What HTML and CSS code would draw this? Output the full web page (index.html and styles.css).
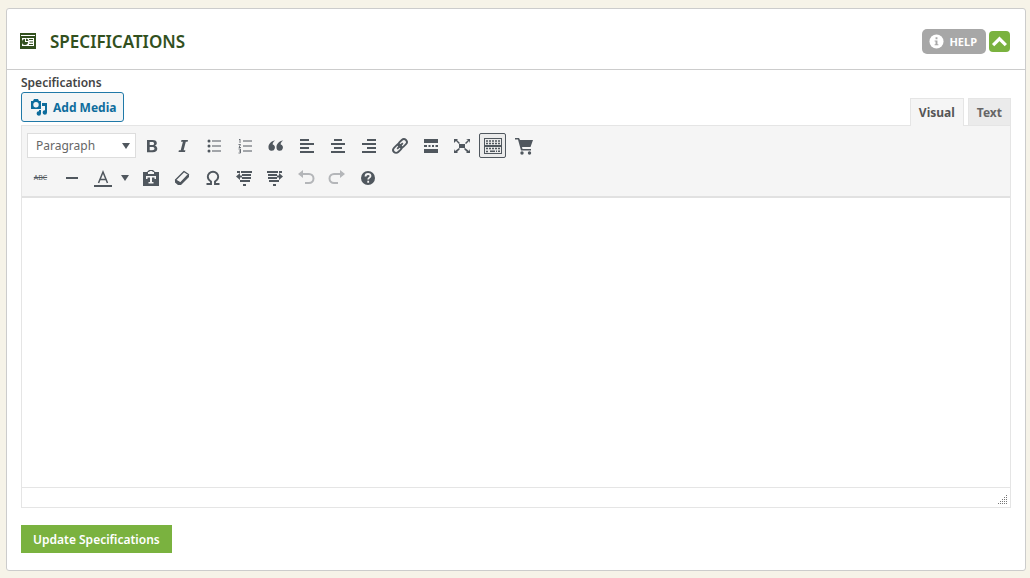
FILE: index.html
```html
<!DOCTYPE html>
<html lang="en">
<head>
  <meta charset="UTF-8" />
  <meta name="viewport" content="width=device-width, initial-scale=1.0" />
  <title>Specifications</title>
  <link rel="stylesheet" href="styles.css">
</head>
<body>
  <section class="panel">
    <header class="panel-header">
      <svg class="panel-icon" viewBox="0 0 16 16" aria-hidden="true">
        <path fill="currentColor" fill-rule="evenodd" d="M0 0h16v16H0zM1 2v1h14V2zM2 5v8h12V5z"/>
        <path fill="currentColor" d="M5 6a3 3 0 1 0 3 3H5zM6 5.500a3 3 0 0 1 2.500 2.500H6zM9 6h4v1H9zM9.500 8.500H13v1H9.500zM9 11h4v1H9z"/>
      </svg>
      <h2>SPECIFICATIONS</h2>
      <div class="panel-actions">
        <button type="button" class="help-button">
          <svg viewBox="0 0 16 16" aria-hidden="true"><circle cx="8" cy="8" r="7.500" fill="#fff"/><path fill="#a7a7a7" d="M7 3.500h2v2H7zM6 7h3v4h1v1H6v-1h1V8H6z"/></svg>
          HELP
        </button>
        <button type="button" class="collapse-button" aria-label="Collapse">
          <svg viewBox="0 0 16 16" aria-hidden="true"><path d="M2 11.500l6-6 6 6" fill="none" stroke="#fff" stroke-width="3"/></svg>
        </button>
      </div>
    </header>

    <form class="panel-body">
      <label class="field-label" for="specifications">Specifications</label>
      <div class="editor-tools">
        <button type="button" class="media-button">
          <svg viewBox="0 0 18 18" aria-hidden="true">
            <path fill="currentColor" fill-rule="evenodd" d="M1 3h2l1-2h4l1 2h2v8H1zM6 4a2.700 2.700 0 1 0 0 5.400A2.700 2.700 0 0 0 6 4z"/>
            <path fill="currentColor" d="M12 5h5v9.500a2.200 2.200 0 1 1-2-2.200V8h-3zM9 12h2v3.500a2.200 2.200 0 1 1-2-2.200z"/>
          </svg>
          Add Media
        </button>
        <div class="editor-tabs">
          <button type="button" class="tab active">Visual</button>
          <button type="button" class="tab">Text</button>
        </div>
      </div>

      <div class="editor">
        <div class="toolbar">
          <!-- First row -->
          <div class="toolbar-row">
            <div class="format">
              <select aria-label="Format">
                <option>Paragraph</option>
              </select>
              <svg viewBox="0 0 8 6" aria-hidden="true"><path fill="currentColor" d="M0 0h8L4 6z"/></svg>
            </div>
            <div class="tool-group">
              <button type="button" class="tool" aria-label="Bold">
                <svg viewBox="0 0 20 20"><path fill="currentColor" fill-rule="evenodd" d="M5 4h5.500c3 0 4.300 1.200 4.300 3 0 1.400-.8 2.300-2 2.700 1.500.3 2.500 1.400 2.500 3 0 2.200-1.600 3.500-4.500 3.500H5zM7.700 6v3h2.200c1.500 0 2.200-.5 2.200-1.500S11.400 6 10 6zM7.700 11v3.200h2.500c1.500 0 2.300-.5 2.300-1.600S11.700 11 10.200 11z"/></svg>
              </button>
              <button type="button" class="tool" aria-label="Italic">
                <svg viewBox="0 0 20 20"><path fill="currentColor" d="M8.500 4H15l-.4 1.800h-1.800L10.600 14.200h1.800l-.4 1.800H5.500l.4-1.800h1.800l2.200-8.400H8z"/></svg>
              </button>
              <button type="button" class="tool" aria-label="Bulleted list">
                <svg viewBox="0 0 20 20"><g fill="currentColor"><circle cx="5" cy="5" r="1.500"/><circle cx="5" cy="10" r="1.500"/><circle cx="5" cy="15" r="1.500"/><path d="M8 4.500h9v1H8zM8 9.500h9v1H8zM8 14.500h9v1H8z"/></g></svg>
              </button>
              <button type="button" class="tool" aria-label="Numbered list">
                <svg viewBox="0 0 20 20"><g fill="none" stroke="currentColor"><path d="M8 5h9M8 10h9M8 15h9"/><path stroke-width=".8" d="M4 4l1-1v4M3.500 8.500h2L4 11.500h2M3.500 13h2v4h-2M4 15h1.500"/></g></svg>
              </button>
              <button type="button" class="tool" aria-label="Blockquote">
                <svg viewBox="0 0 20 20"><path fill="currentColor" d="M9.200 4.500C7 6 6.500 7.500 6.700 8.600a3.200 3.200 0 1 1-4.200 3C2.300 8 5 5 9.200 4.500zM17.200 4.500c-2.200 1.500-2.700 3-2.500 4.100a3.200 3.200 0 1 1-4.200 3C10.300 8 13 5 17.200 4.500z"/></svg>
              </button>
              <button type="button" class="tool" aria-label="Align left">
                <svg viewBox="0 0 20 20"><path fill="currentColor" d="M3 3h9v2H3zM3 7h14v2H3zM3 11h9v2H3zM3 15h14v2H3z"/></svg>
              </button>
              <button type="button" class="tool" aria-label="Align center">
                <svg viewBox="0 0 20 20"><path fill="currentColor" d="M6 3h8v2H6zM3 7h14v2H3zM6 11h8v2H6zM3 15h14v2H3z"/></svg>
              </button>
              <button type="button" class="tool" aria-label="Align right">
                <svg viewBox="0 0 20 20"><path fill="currentColor" d="M8 3h9v2H8zM3 7h14v2H3zM8 11h9v2H8zM3 15h14v2H3z"/></svg>
              </button>
              <button type="button" class="tool" aria-label="Insert link">
                <svg viewBox="0 0 20 20"><g transform="rotate(-45 10 10)" fill="none" stroke="currentColor" stroke-width="1.800"><rect x="1.500" y="7" width="9.500" height="6" rx="3"/><rect x="9" y="7" width="9.500" height="6" rx="3"/><path d="M6 10h8"/></g></svg>
              </button>
              <button type="button" class="tool" aria-label="Read more">
                <svg viewBox="0 0 20 20"><path fill="currentColor" d="M3 3h14v4H3zM3 9h3v2H3zM7.500 9h2v2h-2zM11 9h2v2h-2zM14.500 9H17v2h-2.500zM3 13h14v4H3z"/></svg>
              </button>
              <button type="button" class="tool" aria-label="Fullscreen">
                <svg viewBox="0 0 20 20"><path fill="currentColor" d="M7 8h6v4H7zM2 3h4L5 4l3 3-1 1-3-3-2 2zM18 3v4l-1-2-3 3-1-1 3-3-2-1zM2 17v-4l1 2 4-3 1 1-3 3 1 1zM18 17h-4l1-1-3-3 1-1 4 3 1-2z"/></svg>
              </button>
              <button type="button" class="tool pressed" aria-label="Toolbar toggle" aria-pressed="true">
                <svg viewBox="0 0 20 20"><path fill="currentColor" fill-rule="evenodd" d="M1 2h18v16H1zM2 3v6h16V3zM2 11v6h16v-6z"/><path fill="none" stroke="currentColor" stroke-width="1.500" stroke-dasharray="2 1" d="M3 5h14M3 7.500h14M3 12.500h14M3 15.500h3"/><path fill="currentColor" d="M7 14.500h5v1.500H7zM13 14.500h1v1.500h-1zM15 14.500h2v1.500h-2z"/></svg>
              </button>
              <button type="button" class="tool" aria-label="Products">
                <svg viewBox="0 0 20 20"><path fill="currentColor" d="M1 2h4l1 2h13l-2.500 7H8l.5 2H17v1.500H7L4 3.500H1z"/><circle cx="8" cy="17" r="1.700" fill="currentColor"/><circle cx="15.500" cy="17" r="1.700" fill="currentColor"/></svg>
              </button>
            </div>
          </div>
          <!-- Second row -->
          <div class="toolbar-row">
            <button type="button" class="tool strike" aria-label="Strikethrough"><s>ABC</s></button>
            <button type="button" class="tool" aria-label="Horizontal line">
              <svg viewBox="0 0 20 20"><path fill="currentColor" d="M4 9h12v2H4z"/></svg>
            </button>
            <div class="color-group">
              <button type="button" class="tool" aria-label="Text color">
                <svg viewBox="0 0 20 20"><path fill="none" stroke="currentColor" stroke-width="1.500" d="M5.500 15L10 4l4.500 11M7 11.500h6"/><path fill="currentColor" d="M1 17h18v2H1z"/></svg>
              </button>
              <button type="button" class="tool tool-caret" aria-label="Choose color">
                <svg viewBox="0 0 8 6"><path fill="currentColor" d="M0 0h8L4 6z"/></svg>
              </button>
            </div>
            <button type="button" class="tool" aria-label="Paste as text">
              <svg viewBox="0 0 20 20"><path fill="currentColor" fill-rule="evenodd" d="M2 4h4l2-2h4l2 2h4v14H2zM7 4v2h6V4h-1l-1-1H9L8 4zM5 8v3h1.500V9.500H9V14H7.500v1.500h5V14H11V9.500h2.500V11H15V8z"/></svg>
            </button>
            <button type="button" class="tool" aria-label="Clear formatting">
              <svg viewBox="0 0 20 20"><path fill="none" stroke="currentColor" stroke-width="1.400" stroke-linejoin="round" d="M3.500 12L12 3.500l4.500 3L8.500 15z"/><path fill="currentColor" d="M3 11.500l5.500 3L17 6v3l-8 8H6l-3-2.500z"/></svg>
            </button>
            <button type="button" class="tool" aria-label="Special character">
              <svg viewBox="0 0 20 20"><path fill="none" stroke="currentColor" stroke-width="1.900" d="M3.500 16H8v-2.500C5.500 12 4.800 10.500 4.800 8.800a5.200 5 0 0 1 10.400 0c0 1.700-.7 3.200-3.200 4.700V16h4.500"/></svg>
            </button>
            <button type="button" class="tool" aria-label="Decrease indent">
              <svg viewBox="0 0 20 20"><path fill="currentColor" d="M3 3h3v2H3zM7 3h11v2H7zM8 6h9v2H8zM8 9h9v2H8zM6 12h10v2H6zM9 16h3v2H9zM2 8.500L6 5v2.500h2v2H6V12z"/></svg>
            </button>
            <button type="button" class="tool" aria-label="Increase indent">
              <svg viewBox="0 0 20 20"><path fill="currentColor" d="M2 3h11v2H2zM14 3h3v2h-3zM3 6h9v2H3zM3 9h9v2H3zM4 12h10v2H4zM8 16h3v2H8zM18 8.500L14 5v2.500h-2v2h2V12z"/></svg>
            </button>
            <button type="button" class="tool" aria-label="Undo" disabled>
              <svg viewBox="0 0 20 20"><path fill="none" stroke="currentColor" stroke-width="2" d="M6 6h7a4.500 4.500 0 0 1 0 9H9"/><path fill="currentColor" d="M2 6l5-4v8z"/></svg>
            </button>
            <button type="button" class="tool" aria-label="Redo" disabled>
              <svg viewBox="0 0 20 20"><path fill="none" stroke="currentColor" stroke-width="2" d="M14 6H7a4.500 4.500 0 0 0 0 9h4"/><path fill="currentColor" d="M18 6l-5-4v8z"/></svg>
            </button>
            <button type="button" class="tool" aria-label="Keyboard shortcuts">
              <svg viewBox="0 0 20 20"><circle cx="10" cy="10" r="7" fill="currentColor"/><path fill="none" stroke="#f5f5f5" stroke-width="1.800" d="M7.500 8.500c0-3.500 5-3 5-.5 0 1.700-2.300 1.600-2.300 3.500M10.200 12.700v2"/></svg>
            </button>
          </div>
        </div>
        <textarea id="specifications"></textarea>
        <div class="statusbar">
          <svg viewBox="0 0 10 10" aria-hidden="true"><path fill="#777" d="M8 0h1v1H8zM6 2h1v1H6zM8 2h1v1H8zM4 4h1v1H4zM6 4h1v1H6zM8 4h1v1H8zM2 6h1v1H2zM4 6h1v1H4zM6 6h1v1H6zM8 6h1v1H8zM0 8h1v1H0zM2 8h1v1H2zM4 8h1v1H4zM6 8h1v1H6zM8 8h1v1H8z"/></svg>
        </div>
      </div>

      <button type="button" class="update-button">Update Specifications</button>
    </form>
  </section>
</body>
</html>
```
FILE: styles.css
```css
* {
  box-sizing: border-box;
}

body {
  margin: 0;
  padding: 8px 4px 6px 6px;
  background-color: #f6f3e8;
  color: #444;
  font-family: "Noto Sans", "Open Sans", sans-serif;
  font-size: 12px;
}

button,
select,
textarea {
  font-family: inherit;
  margin: 0;
}

button {
  cursor: pointer;
}

svg {
  display: block;
  flex-shrink: 0;
}

.panel {
  background: #fff;
  border: 1px solid #ccc;
  border-radius: 3px;
}

/* Panel header */
.panel-header {
  display: flex;
  align-items: center;
  height: 61px;
  padding: 4px 15px 0 13px;
  border-bottom: 1px solid #ccc;
}

.panel-header h2 {
  margin: 0 0 0 14px;
  padding-top: 2px;
  color: #32501e;
  font-size: 17px;
  font-weight: 600;
  line-height: 24px;
}

.panel-icon {
  width: 16px;
  height: 16px;
  color: #32501e;
}

.panel-actions {
  display: flex;
  align-items: center;
  gap: 3px;
  margin-left: auto;
}

.help-button {
  display: flex;
  align-items: center;
  gap: 5px;
  height: 25px;
  padding: 0 9px 0 7px;
  background: #a7a7a7;
  border: none;
  border-radius: 5px;
  color: #fff;
  font-size: 11px;
  font-weight: 700;
}

.help-button svg {
  width: 15px;
  height: 15px;
}

.collapse-button {
  display: grid;
  place-items: center;
  width: 21px;
  height: 21px;
  padding: 0;
  background: #7ab23f;
  border: none;
  border-radius: 4px;
}

.collapse-button svg {
  width: 17px;
  height: 17px;
}

/* Panel body */
.panel-body {
  padding: 4px 14px 17px;
}

.field-label {
  display: block;
  font-weight: 600;
  line-height: 18px;
}

.editor-tools {
  display: flex;
  justify-content: space-between;
  align-items: flex-start;
  height: 33px;
}

.media-button {
  display: flex;
  align-items: center;
  gap: 5px;
  height: 30px;
  padding: 0 7px 0 8px;
  background: #f3f5f6;
  border: 1px solid #2079a8;
  border-radius: 3px;
  color: #0e6d9d;
  font-size: 12px;
  font-weight: 700;
}

.media-button svg {
  width: 18px;
  height: 18px;
}

.editor-tabs {
  display: flex;
  align-self: flex-end;
  gap: 4px;
}

.tab {
  height: 27px;
  padding: 0 8px;
  background: #ebebeb;
  border: 1px solid #e5e5e5;
  border-bottom: none;
  color: #666;
  font-size: 12px;
  font-weight: 700;
}

.tab.active {
  height: 28px;
  margin-bottom: -1px;
  background: #f5f5f5;
  color: #555;
  z-index: 1;
}

/* Editor */
.editor {
  border: 1px solid #e5e5e5;
}

.toolbar {
  display: grid;
  gap: 7px;
  padding: 7px 5px 6px;
  background: #f5f5f5;
  border-bottom: 2px solid #e1e1e1;
}

.toolbar-row {
  display: flex;
  align-items: center;
  gap: 4px;
}

.tool-group {
  display: flex;
  gap: 4px;
  margin-left: -2px;
}

.format {
  display: grid;
  align-items: center;
  width: 109px;
  height: 25px;
}

.format select,
.format svg {
  grid-area: 1 / 1;
}

.format select {
  width: 100%;
  height: 25px;
  padding: 0 8px;
  appearance: none;
  background: #fff;
  border: 1px solid #ddd;
  border-radius: 0;
  color: #666;
  font-size: 12px;
}

.format svg {
  justify-self: end;
  width: 8px;
  height: 6px;
  margin-right: 6px;
  color: #50575e;
  pointer-events: none;
}

.tool {
  display: grid;
  place-items: center;
  width: 27px;
  height: 25px;
  padding: 0;
  background: none;
  border: 1px solid transparent;
  border-radius: 2px;
  color: #50575e;
}

.tool svg {
  width: 20px;
  height: 20px;
}

.tool.pressed {
  background: #ebebeb;
  border-color: #50575e;
}

.tool:disabled {
  color: #b4b6b9;
}

.tool.strike {
  font-size: 7px;
}

.color-group {
  display: flex;
}

.tool.tool-caret {
  width: 17px;
}

.tool.tool-caret svg {
  width: 8px;
  height: 6px;
}

.editor textarea {
  display: block;
  width: 100%;
  height: 289px;
  padding: 10px;
  border: none;
  outline: none;
  resize: none;
  font-size: 13px;
}

.statusbar {
  display: flex;
  justify-content: flex-end;
  align-items: flex-end;
  height: 20px;
  padding: 2px;
  border-top: 1px solid #e5e5e5;
}

.statusbar svg {
  width: 10px;
  height: 10px;
}

.update-button {
  display: block;
  height: 28px;
  margin-top: 17px;
  padding: 0 12px;
  background: #7ab23f;
  border: none;
  color: #fff;
  font-size: 12px;
  font-weight: 600;
}
```
